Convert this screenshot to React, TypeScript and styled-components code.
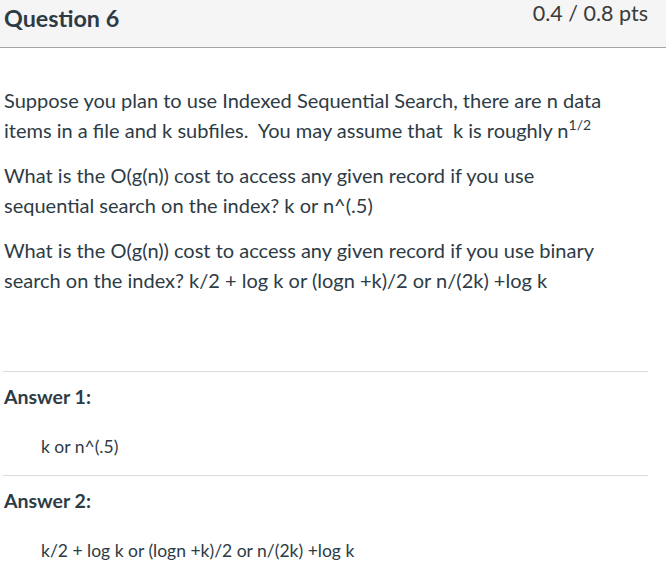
import React from "react";
import styled, { createGlobalStyle } from "styled-components";

const Global = createGlobalStyle`
  html, body { margin: 0; padding: 0; background: #ffffff; }
  body { font-family: Lato, "Open Sans", sans-serif; color: #2d3b45; }
`;

const Page = styled.div`
  width: 666px;
`;

const Header = styled.div`
  display: flex;
  justify-content: space-between;
  align-items: flex-start;
  height: 47px;
  background: #f5f5f5;
  border-bottom: 1px solid #a5a5a5;
  padding: 0 18px 0 4px;
`;

const Title = styled.h2`
  margin: 0;
  padding-top: 4px;
  font-size: 23.3px;
  line-height: 29px;
  font-weight: 700;
  color: #2d3b45;
`;

const Points = styled.div`
  font-size: 21.5px;
  line-height: 26px;
  color: #3a3a3a;
`;

const Body = styled.div`
  padding: 38px 0 0 4px;
  width: 616px;
`;

const Para = styled.p`
  margin: 0 0 16px;
  font-size: 20px;
  line-height: 29.5px;
`;

const Sup = styled.sup`
  font-size: 14px;
  line-height: 0;
`;

const Questions = styled.div`
  padding-bottom: 60px;
`;

const AnswerBlock = styled.div`
  margin: 0 18px 0 3px;
  border-top: 1px solid #dcdcdc;
  padding: 12px 0 17px;
`;

const AnswerLabel = styled.div`
  font-size: 19.5px;
  line-height: 26px;
  font-weight: 700;
  padding-left: 1px;
`;

const AnswerText = styled.div`
  margin-top: 26px;
  padding-left: 38px;
  font-size: 17.5px;
  line-height: 22px;
`;

const answers = ["k or n^(.5)", "k/2 + log k or (logn +k)/2 or n/(2k) +log k"];

export default function App() {
  return (
    <Page>
      <Global />
      <Header>
        <Title>Question 6</Title>
        <Points>0.4 / 0.8 pts</Points>
      </Header>
      <Body>
        <Questions>
          <Para>
            Suppose you plan to use Indexed Sequential Search, there are n data items in a file and k
            subfiles.{"\u00a0"} You may assume that{"\u00a0"} k is roughly n<Sup>1/2</Sup>
          </Para>
          <Para>
            What is the O(g(n)) cost to access any given record if you use sequential search on the
            index? k or n^(.5)
          </Para>
          <Para>
            What is the O(g(n)) cost to access any given record if you use binary search on the index?
            k/2 + log k or (logn +k)/2 or n/(2k) +log k
          </Para>
        </Questions>
      </Body>
      {answers.map((a, i) => (
        <AnswerBlock key={i}>
          <AnswerLabel>Answer {i + 1}:</AnswerLabel>
          <AnswerText>{a}</AnswerText>
        </AnswerBlock>
      ))}
    </Page>
  );
}
